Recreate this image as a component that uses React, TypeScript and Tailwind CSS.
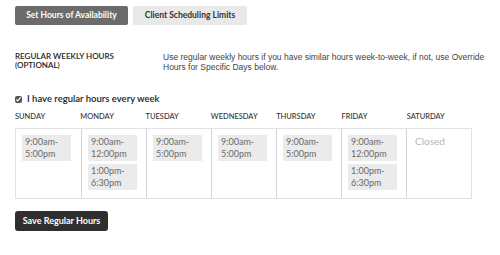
import React from "react";

type Day = { name: string; slots: string[][] };

const days: Day[] = [
  { name: "SUNDAY", slots: [["9:00am-", "5:00pm"]] },
  { name: "MONDAY", slots: [["9:00am-", "12:00pm"], ["1:00pm-", "6:30pm"]] },
  { name: "TUESDAY", slots: [["9:00am-", "5:00pm"]] },
  { name: "WEDNESDAY", slots: [["9:00am-", "5:00pm"]] },
  { name: "THURSDAY", slots: [["9:00am-", "5:00pm"]] },
  { name: "FRIDAY", slots: [["9:00am-", "12:00pm"], ["1:00pm-", "6:30pm"]] },
  { name: "SATURDAY", slots: [] },
];

export default function App() {
  return (
    <div className="h-[255px] w-[500px] bg-white pl-[15px] font-['Lato',sans-serif] text-[#222]">
      <div className="flex gap-[5px] pt-[6px]">
        <button className="h-[19px] w-[113px] rounded-[2px] bg-[#6b6b6b] text-[8.5px] font-bold text-white">
          Set Hours of Availability
        </button>
        <button className="h-[19px] w-[114px] rounded-[2px] bg-[#e9e9e9] text-[8.5px] font-bold text-[#333]">
          Client Scheduling Limits
        </button>
      </div>

      <div className="mt-[27px] flex">
        <div className="w-[148px] text-[8px] font-semibold leading-[9px] text-[#222]">
          REGULAR WEEKLY HOURS
          <br />
          (OPTIONAL)
        </div>
        <p className="w-[330px] font-['Liberation_Sans',sans-serif] text-[8.5px] leading-[10px] text-[#444]">
          Use regular weekly hours if you have similar hours week-to-week, if not, use Override Hours for Specific Days below.
        </p>
      </div>

      <label className="mt-[20px] flex items-center gap-[5px]">
        <input type="checkbox" defaultChecked className="h-[7px] w-[7px] accent-[#555]" />
        <span className="text-[9.5px] font-semibold text-[#222]">I have regular hours every week</span>
      </label>

      <div className="mt-[5px] grid w-[457px] grid-cols-7">
        {days.map((d) => (
          <div key={d.name} className="pb-[5px] text-[7.5px] font-medium text-[#333]">
            {d.name}
          </div>
        ))}
      </div>

      <div className="grid h-[71px] w-[457px] grid-cols-7 border border-[#e2e2e2]">
        {days.map((d, i) => (
          <div
            key={d.name}
            className={`flex flex-col gap-[3px] pl-[6px] pt-[6px] ${i > 0 ? "border-l border-[#d4d4d4]" : ""}`}
          >
            {d.slots.length === 0 ? (
              <span className="pl-[2px] text-[10px] leading-[12px] text-[#b5b5b5]">Closed</span>
            ) : (
              d.slots.map((s) => (
                <div
                  key={s[0]}
                  className="h-[26px] w-[49px] bg-[#ebebeb] pl-[3px] pt-[1px] text-[9px] leading-[12px] text-[#6a6a6a]"
                >
                  {s[0]}
                  <br />
                  {s[1]}
                </div>
              ))
            )}
          </div>
        ))}
      </div>

      <button className="mt-[12px] h-[20px] w-[93px] rounded-[3px] bg-[#2f2f2f] text-[9px] font-bold text-white">
        Save Regular Hours
      </button>
    </div>
  );
}
